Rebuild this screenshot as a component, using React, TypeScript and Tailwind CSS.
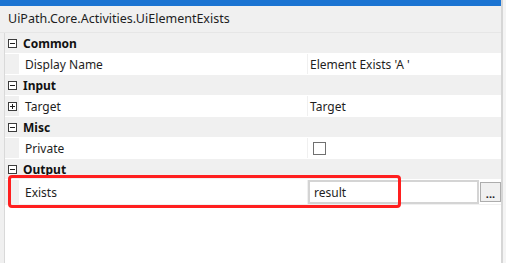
import React from "react";

const Box = ({ plus }: { plus?: boolean }) => (
  <span className="relative block w-[9px] h-[9px] border border-[#3c3c3c] bg-white">
    <span className="absolute left-[1px] top-[3px] w-[5px] h-px bg-[#1e1e1e]" />
    {plus && <span className="absolute left-[3px] top-[1px] w-px h-[5px] bg-[#1e1e1e]" />}
  </span>
);

const Header = ({ label }: { label: string }) => (
  <div className="flex items-center h-[20px] bg-[#f0f0f0]">
    <div className="w-[3px]" />
    <Box />
    <span className="ml-[6px] pt-[2px] font-bold text-[12px] text-[#111]">{label}</span>
  </div>
);

const Row = ({
  name,
  value,
  plus,
  h = "h-[20px]",
}: {
  name: string;
  value: React.ReactNode;
  plus?: boolean;
  h?: string;
}) => (
  <div className={`flex ${h} bg-[#f0f0f0]`}>
    <div className="w-[14px] flex items-center">
      {plus && (
        <div className="ml-[3px]">
          <Box plus />
        </div>
      )}
    </div>
    <div className="w-[288px] bg-white flex items-center pl-[6px] pt-[2px] text-[12px] text-[#1e1e1e]">
      {name}
    </div>
    <div className="w-px bg-[#f0f0f0]" />
    <div className="flex-1 bg-white flex items-center">{value}</div>
  </div>
);

export default function App() {
  return (
    <div
      className="w-[506px] h-[263px] bg-[#f0f0f0] flex overflow-hidden relative"
      style={{ fontFamily: '"Noto Sans", "Noto Sans CJK SC", sans-serif' }}
    >
      <div className="w-[501px] flex flex-col">
        <div className="h-[6px] w-[502px] bg-[#1b74d2]" />
        <div className="h-[27px] flex items-center pl-[8px] pt-[1px] text-[12.5px] text-[#1e1e1e] border-b border-[#e6e6e6]">
          UiPath.Core.Activities.UiElementExists
        </div>
        <div className="flex flex-1">
          <div className="w-[4px]" />
          <div className="w-px bg-[#d9d9d9]" />
          <div className="flex-1 flex flex-col gap-px bg-white">
            <Header label="Common" />
            <Row name="Display Name" value={<span className="pl-[2px] pt-[2px] text-[12px] text-[#1e1e1e]">Element Exists 'A '</span>} />
            <Header label="Input" />
            <Row name="Target" plus value={<span className="pl-[2px] pt-[2px] text-[12px] text-[#1e1e1e]">Target</span>} />
            <Header label="Misc" />
            <Row
              name="Private"
              value={<span className="ml-[5px] block w-[13px] h-[13px] border border-[#707070] bg-white" />}
            />
            <Header label="Output" />
            <div className="flex flex-col bg-[#f0f0f0] pb-px">
              <Row
                name="Exists"
                h="h-[24px]"
                value={
                  <div className="flex w-full h-full items-stretch">
                    <div className="flex-1 border-2 border-[#d4d4d4] flex items-center pl-[4px] pt-[1px] text-[12px] text-[#1e1e1e]">
                      result
                    </div>
                    <div className="w-[21px] ml-px my-[2px] bg-[#f0f0f0] border border-[#adadad] flex items-end justify-center pb-[2px] text-[11px] leading-none text-[#1e1e1e] font-bold">
                      ...
                    </div>
                  </div>
                }
              />
            </div>
            <div className="flex-1 bg-white" />
          </div>
        </div>
      </div>
      <div className="w-[2px] bg-[#d6d6d6]" />
      <div className="flex-1 bg-[#f4f4f4]" />
      <div className="absolute left-[8px] top-[175px] w-[393px] h-[33px] border-[3px] border-[#ff1f1f] rounded-[4px]" />
    </div>
  );
}
